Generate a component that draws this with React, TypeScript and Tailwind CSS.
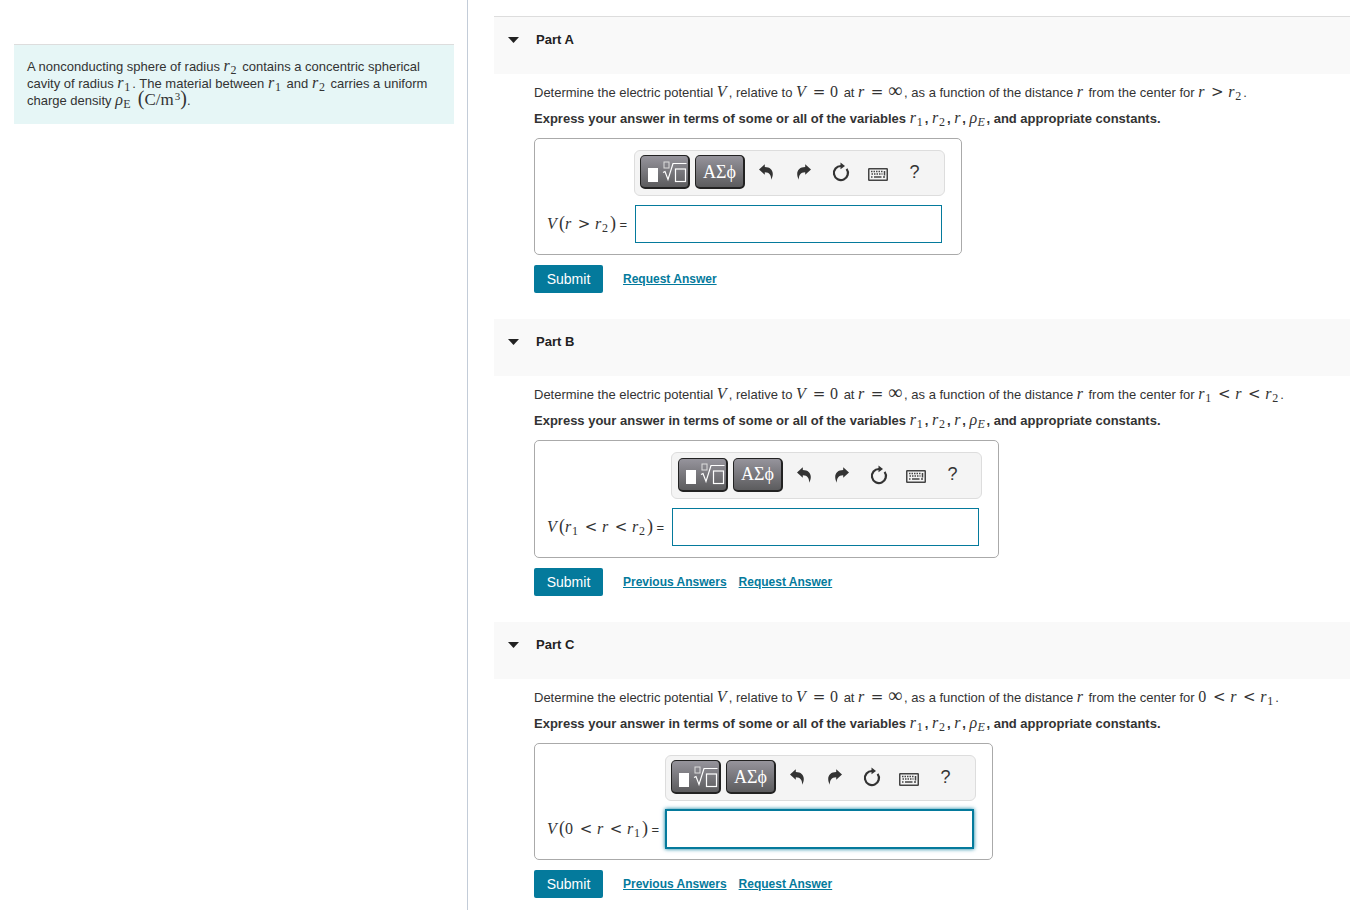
import type { ReactNode } from "react";

// ─── Math helpers ─────────────────────────────────────────────────────────────

function Var({ children }: { children: ReactNode }) {
  return (
    <i className="inline-block w-3 font-['Liberation_Serif',serif] text-[16px] font-normal leading-none">{children}</i>
  );
}

function Zero() {
  return (
    <span className="inline-block w-2.5 font-['Liberation_Serif',serif] text-[16px] font-normal leading-none">0</span>
  );
}

function Infinity() {
  return (
    <span className="inline-block w-4 font-['Liberation_Serif',serif] text-[20px] font-normal leading-none">∞</span>
  );
}

function Paren({ children }: { children: ReactNode }) {
  return (
    <span className="font-['Liberation_Serif',serif] text-[18px] font-normal leading-none">{children}</span>
  );
}

function Radius({ sub }: { sub?: string }) {
  return (
    <span className="inline-block whitespace-nowrap font-['Liberation_Serif',serif] text-[16px] font-normal leading-none">
      <i className={`inline-block ${sub ? "w-[7px]" : "w-2"}`}>r</i>
      {sub && <sub className="inline-block w-2 text-[12px]">{sub}</sub>}
    </span>
  );
}

function Rel({ children }: { children: ReactNode }) {
  return (
    <span className="mx-1 inline-block w-3.5 text-center font-['DejaVu_Sans',sans-serif] text-[15px] font-normal leading-none">
      {children}
    </span>
  );
}

function Rho({ upright }: { upright?: boolean }) {
  return (
    <span className="inline-block whitespace-nowrap font-['Liberation_Serif',serif] text-[16px] font-normal leading-none">
      <i className="inline-block w-2">ρ</i>
      <sub className={`inline-block w-[9px] text-[12px] ${upright ? "" : "italic"}`}>E</sub>
    </span>
  );
}

// ─── Icons ────────────────────────────────────────────────────────────────────

function ArrowIcon({ flip }: { flip?: boolean }) {
  return (
    <svg width="14" height="16" viewBox="0 0 14 16" className={flip ? "-scale-x-100" : ""} aria-hidden="true">
      <path
        d="M0 5.500 5.800.300V3C10.800 3 13.800 5.800 13.800 10c0 2-.7 4-1.600 5.700C12.200 11.500 10.800 8.300 5.800 8.200V10.800Z"
        fill="#333"
      />
    </svg>
  );
}

function ResetIcon() {
  return (
    <svg width="18" height="20" viewBox="0 0 18 20" fill="none" aria-hidden="true">
      <path d="M14.600 6.900A7 7 0 1 1 9 4" stroke="#333" strokeWidth="2.200" />
      <path d="M8.500.600 13 4 8.500 7.200Z" fill="#333" />
    </svg>
  );
}

function KeyboardIcon() {
  return (
    <svg width="20" height="13" viewBox="0 0 20 13" fill="none" aria-hidden="true">
      <rect x=".75" y=".75" width="18.500" height="11.500" rx=".5" stroke="#444" strokeWidth="1.500" />
      <path d="M3 3.500h12M3.500 6h11" stroke="#444" strokeWidth="1.500" strokeDasharray="1.500 1" />
      <path d="M3 9h1.500M6 9h7.500M15 9h2M16.500 3v4.500" stroke="#444" strokeWidth="1.500" />
    </svg>
  );
}

function TemplatesIcon() {
  return (
    <svg width="39" height="22" viewBox="0 0 39 22" fill="none" aria-hidden="true">
      <rect x="0" y="7" width="10" height="14" fill="#fff" />
      <rect x="16" y="1" width="5" height="6" stroke="#ddd" />
      <path d="M15 11.500 17 10.500 20 18.500 25 2.500H38.500" stroke="#fff" strokeWidth="1.200" />
      <rect x="27.500" y="8" width="10" height="12.500" stroke="#fff" strokeWidth="1.200" />
    </svg>
  );
}

// ─── Answer box ───────────────────────────────────────────────────────────────

const DARK_BUTTON =
  "flex h-[34px] w-[50px] items-center justify-center rounded-[5px] border border-b-2 border-r-2 border-[#222] bg-linear-to-b from-[#96949c] to-[#5c5c5e] text-white";
const PLAIN_BUTTON = "flex h-[34px] items-center justify-center text-[#333]";

function Toolbar({ size }: { size: string }) {
  return (
    <div
      role="toolbar"
      aria-label="Equation tools"
      className={`flex w-[311px] items-center rounded-[6px] border border-[#ddd] bg-[#f4f4f4] pb-0.5 ${size}`}
    >
      <button type="button" aria-label="Templates" className={`${DARK_BUTTON} pl-1.5`}>
        <TemplatesIcon />
      </button>
      <button
        type="button"
        className={`${DARK_BUTTON} ml-[5px] font-['Liberation_Serif',serif] text-[18px] leading-5`}
      >
        ΑΣϕ
      </button>
      <button type="button" aria-label="Undo" className={`${PLAIN_BUTTON} ml-0.5 w-[38px]`}>
        <ArrowIcon />
      </button>
      <button type="button" aria-label="Redo" className={`${PLAIN_BUTTON} w-[38px]`}>
        <ArrowIcon flip />
      </button>
      <button type="button" aria-label="Reset" className={`${PLAIN_BUTTON} w-9`}>
        <ResetIcon />
      </button>
      <button type="button" aria-label="Keyboard shortcuts" className={`${PLAIN_BUTTON} w-[37px] pt-1`}>
        <KeyboardIcon />
      </button>
      <button type="button" aria-label="Help" className={`${PLAIN_BUTTON} w-[37px] text-[18px]`}>
        ?
      </button>
    </div>
  );
}

type Part = {
  id: string;
  range: ReactNode;
  labelWidth: string;
  toolbar: string;
  focused?: boolean;
  links: string[];
};

const PARTS: Part[] = [
  {
    id: "A",
    range: (
      <>
        <Radius />
        <Rel>&gt;</Rel>
        <Radius sub="2" />
      </>
    ),
    labelWidth: "w-[87px]",
    toolbar: "h-[46px] pl-[5px]",
    links: ["Request Answer"],
  },
  {
    id: "B",
    range: (
      <>
        <Radius sub="1" />
        <Rel>&lt;</Rel>
        <Radius />
        <Rel>&lt;</Rel>
        <Radius sub="2" />
      </>
    ),
    labelWidth: "w-[124px]",
    toolbar: "h-[47px] pl-1.5",
    links: ["Previous Answers", "Request Answer"],
  },
  {
    id: "C",
    range: (
      <>
        <Zero />
        <Rel>&lt;</Rel>
        <Radius />
        <Rel>&lt;</Rel>
        <Radius sub="1" />
      </>
    ),
    labelWidth: "w-[118px]",
    toolbar: "h-[46px] pl-[5px]",
    focused: true,
    links: ["Previous Answers", "Request Answer"],
  },
];

function PartSection({ part }: { part: Part }) {
  return (
    <section className="pb-[26px]">
      <h2 className="h-[57px] bg-[#f9f9f9] pt-[15px]">
        <button
          type="button"
          aria-expanded="true"
          className="flex items-center pl-3.5 text-[13px] font-bold leading-4 text-[#222]"
        >
          <svg width="11" height="6" viewBox="0 0 11 6" className="mr-[17px]" aria-hidden="true">
            <path d="M0 0h11L5.500 6Z" fill="#222" />
          </svg>
          Part {part.id}
        </button>
      </h2>

      <div className="pl-10">
        <p className="flex h-[35px] items-center whitespace-pre text-[13px]">
          <span>
            Determine the electric potential <Var>V</Var>, relative to <Var>V</Var>
            <Rel>=</Rel>
            <Zero /> at <Radius />
            <Rel>=</Rel>
            <Infinity />, as a function of the distance <Radius /> from the center for {part.range}.
          </span>
        </p>
        <p className="mb-2.5 flex h-[19px] items-center whitespace-pre text-[13px] font-bold">
          <span>
            Express your answer in terms of some or all of the variables <Radius sub="1" />, <Radius sub="2" />,{" "}
            <Radius />, <Rho />, and appropriate constants.
          </span>
        </p>

        <div className="w-fit rounded-[5px] border border-[#aaa] pb-[11px] pl-3 pr-4 pt-[11px]">
          <div className="flex">
            <span className={part.labelWidth} />
            <Toolbar size={part.toolbar} />
          </div>
          <div className="mt-[9px] flex items-center">
            <label
              htmlFor={`answer-${part.id}`}
              className={`whitespace-nowrap text-[13px] leading-5 ${part.labelWidth}`}
            >
              <Var>V</Var>
              <Paren>(</Paren>
              {part.range}
              <Paren>)</Paren> =
            </label>
            <input
              id={`answer-${part.id}`}
              type="text"
              className={`ml-px h-[38px] w-[307px] border border-[#047a9c] bg-white px-2 outline-none ${
                part.focused ? "shadow-[0_0_0_1px_#047a9c,0_0_4px_1px_#047a9c]" : ""
              }`}
            />
          </div>
        </div>

        <div className="mt-2.5 flex h-7 items-center">
          <button type="button" className="mr-5 h-7 w-[69px] rounded-[2px] bg-[#047a9c] text-[14px] text-white">
            Submit
          </button>
          {part.links.map((link) => (
            <a key={link} href="#" className="mr-3 text-[12px] font-bold leading-4 text-[#047a9c] underline">
              {link}
            </a>
          ))}
        </div>
      </div>
    </section>
  );
}

// ─── Page ─────────────────────────────────────────────────────────────────────

export default function App() {
  return (
    <div className="grid h-screen grid-cols-[26fr_49fr] overflow-hidden bg-white font-['Liberation_Sans',Arial,sans-serif] text-[#333]">
      <aside className="min-w-0 border-r border-[#c3ccd8] px-3.5 pr-[13px] pt-11">
        <div className="min-h-20 border-t border-[#ddd] bg-[#e6f6f6] px-[13px] pt-[13px] text-[13px] leading-4">
          A nonconducting sphere of radius <Radius sub="2" /> contains a concentric spherical cavity of radius{" "}
          <Radius sub="1" />. The material between <Radius sub="1" /> and <Radius sub="2" /> carries a uniform charge
          density <Rho upright />{" "}
          <span className="whitespace-nowrap pl-0.5 font-['Liberation_Serif',serif] text-[17px] leading-4">
            <span className="text-[20px] leading-[0]">(</span>
            C/m
            <sup className="pl-px text-[11px]">3</sup>
            <span className="text-[20px] leading-[0]">)</span>
          </span>
          .
        </div>
      </aside>

      <main className="min-w-0 overflow-hidden pl-[26px] pt-4">
        <div className="border-t border-[#ddd]">
          {PARTS.map((part) => (
            <PartSection key={part.id} part={part} />
          ))}
        </div>
      </main>
    </div>
  );
}
